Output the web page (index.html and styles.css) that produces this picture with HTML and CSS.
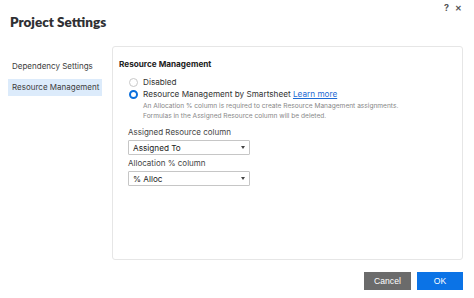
FILE: index.html
```html
<!DOCTYPE html>
<html lang="en">
<head>
  <meta charset="UTF-8">
  <title>Project Settings</title>
  <link rel="stylesheet" href="styles.css">
</head>
<body>

<div class="dialog">
  <!-- Header -->
  <div class="header">
    <h1>Project Settings</h1>
    <div class="header-icons">
      <span class="help">?</span>
      <span class="close">&#x2715;</span>
    </div>
  </div>

  <div class="content">
    <!-- Left Menu -->
    <div class="menu">
      <div class="menu-item">Dependency Settings</div>
      <div class="menu-item selected">Resource Management</div>
    </div>

    <!-- Settings Panel -->
    <div class="panel">
      <h2>Resource Management</h2>

      <label class="radio">
        <span class="dot"></span>
        <span>Disabled</span>
      </label>
      <label class="radio">
        <span class="dot checked"></span>
        <span>Resource Management by Smartsheet <a href="#">Learn more</a></span>
      </label>
      <p class="note">
        An Allocation % column is required to create Resource Management assignments.<br>
        Formulas in the Assigned Resource column will be deleted.
      </p>

      <div class="field-label">Assigned Resource column</div>
      <div class="select">Assigned To <span class="arrow"></span></div>

      <div class="field-label">Allocation % column</div>
      <div class="select">% Alloc <span class="arrow"></span></div>
    </div>
  </div>

  <!-- Footer -->
  <div class="footer">
    <button class="btn cancel">Cancel</button>
    <button class="btn ok">OK</button>
  </div>
</div>

</body>
</html>
```

FILE: styles.css
```css
* {
  box-sizing: border-box;
}

body {
  margin: 0;
  background: #fff;
  font-family: Inter, "Liberation Sans", sans-serif;
  color: #333;
}

.dialog {
  width: 474px;
  height: 298px;
  padding: 0 11px 0 8px;
}

/* Header */
.header {
  display: flex;
  justify-content: space-between;
  height: 46px;
}

.header h1 {
  margin: 14px 0 0 2px;
  font-family: Lato, sans-serif;
  font-size: 13.5px;
  font-weight: 800;
  color: #2f3033;
}

.header-icons {
  display: flex;
  gap: 6px;
  margin: 2px 1px 0 0;
  font-size: 9px;
  font-weight: 700;
  color: #555;
}

.close {
  font-size: 8px;
  margin-top: 1px;
}

.content {
  display: flex;
  gap: 10px;
}

/* Left Menu */
.menu {
  width: 94px;
  padding-top: 12px;
}

.menu-item {
  font-size: 8px;
  color: #3c3c3c;
  padding: 0 4px;
  height: 17px;
  line-height: 17px;
  margin-bottom: 4px;
  white-space: nowrap;
}

.menu-item.selected {
  background: #dcebfb;
}

/* Right Panel */
.panel {
  width: 351px;
  height: 214px;
  border: 1px solid #e6e6e6;
  border-radius: 3px;
  padding: 12px 0 0 6px;
}

.panel h2 {
  margin: 0 0 7px;
  font-size: 8.2px;
  font-weight: 700;
  color: #222;
}

.radio {
  display: flex;
  align-items: center;
  gap: 5px;
  margin-left: 10px;
  font-size: 8.2px;
  color: #333;
  height: 12px;
}

.radio a {
  color: #1d6ad4;
}

.dot {
  width: 9px;
  height: 9px;
  border: 1px solid #c8c8c8;
  border-radius: 50%;
}

.dot.checked {
  border: 2.5px solid #0b6fdc;
}

.note {
  margin: 1px 0 6px 24px;
  font-size: 6.6px;
  line-height: 10px;
  color: #888;
}

.field-label {
  margin-left: 9px;
  font-size: 8px;
  color: #444;
  height: 13px;
}

.select {
  display: flex;
  justify-content: space-between;
  align-items: center;
  width: 122px;
  height: 15px;
  margin: 0 0 3px 9px;
  padding: 0 4px;
  border: 1px solid #c6c6c6;
  border-radius: 1px;
  font-size: 8.2px;
  color: #222;
}

.arrow {
  width: 0;
  height: 0;
  border-left: 2.5px solid transparent;
  border-right: 2.5px solid transparent;
  border-top: 3px solid #444;
}

/* Footer */
.footer {
  display: flex;
  justify-content: flex-end;
  gap: 6px;
  margin-top: 12px;
}

.btn {
  height: 18px;
  border: none;
  color: #fff;
  font-family: "Liberation Sans", sans-serif;
  font-size: 8.6px;
  padding: 0;
}

.cancel {
  width: 47px;
  background: #6b6b6b;
}

.ok {
  width: 46px;
  background: #0b73e6;
}
```
